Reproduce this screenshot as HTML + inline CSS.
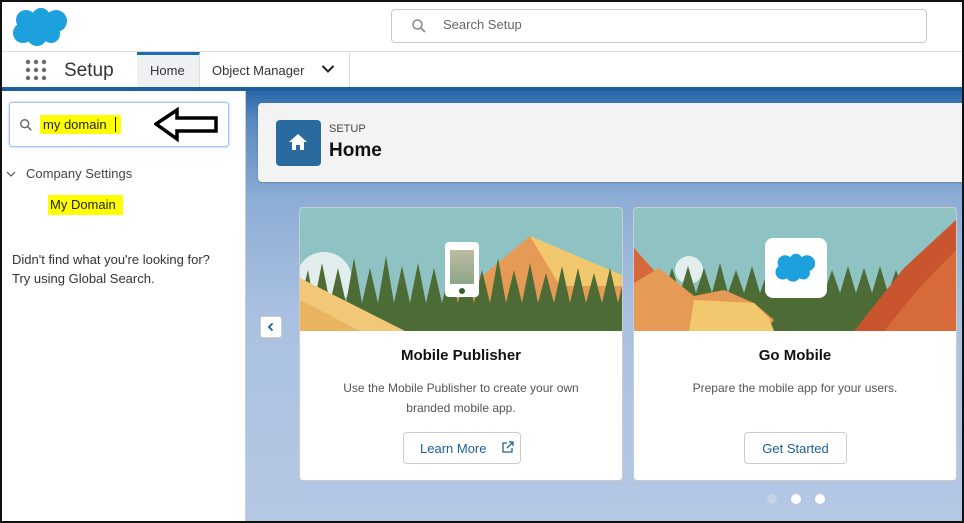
<!DOCTYPE html>
<html><head><style>
*{margin:0;padding:0;box-sizing:border-box}
body{width:964px;height:523px;overflow:hidden;font-family:"Liberation Sans",sans-serif;background:#fff;position:relative;color:#181818}
.frame{position:absolute;inset:0;border:2px solid #111;z-index:50;pointer-events:none}
.abs{position:absolute}
.hl{background:#ffff00}
</style></head><body>
<div class="frame"></div>
<svg class="abs" style="left:11px;top:6px" width="60" height="40" viewBox="0 0 60 40"><g fill="#1ca0de"><circle cx="15" cy="14" r="10"/><circle cx="30" cy="11" r="9"/><circle cx="45" cy="15" r="11"/><circle cx="12" cy="27" r="10"/><circle cx="26" cy="30" r="10"/><circle cx="40" cy="28" r="9"/><rect x="12" y="12" width="34" height="20"/></g></svg>
<div class="abs" style="left:391px;top:9px;width:536px;height:34px;border:1px solid #c9c9c9;border-radius:4px"></div>
<svg class="abs" style="left:411px;top:18px" width="16" height="16" viewBox="0 0 16 16"><circle cx="6.5" cy="6.5" r="4.5" fill="none" stroke="#888" stroke-width="1.5"/><path d="M10 10l4 4" stroke="#888" stroke-width="1.6"/></svg>
<div class="abs" style="left:443px;top:17px;font-size:13px;color:#666">Search Setup</div>
<div class="abs" style="left:0;top:51px;width:964px;height:1px;background:#ddd"></div>
<svg class="abs" style="left:25px;top:59px" width="22" height="22" viewBox="0 0 22 22" fill="#6b6b6b"><circle cx="3" cy="3" r="2.2"/><circle cx="11" cy="3" r="2.2"/><circle cx="19" cy="3" r="2.2"/><circle cx="3" cy="11" r="2.2"/><circle cx="11" cy="11" r="2.2"/><circle cx="19" cy="11" r="2.2"/><circle cx="3" cy="19" r="2.2"/><circle cx="11" cy="19" r="2.2"/><circle cx="19" cy="19" r="2.2"/></svg>
<div class="abs" style="left:64px;top:60px;font-size:19px;color:#333">Setup</div>
<div class="abs" style="left:137px;top:52px;width:63px;height:36px;background:#eef1f4;border-top:3px solid #1b6ea9;border-right:1px solid #ddd"></div>
<div class="abs" style="left:150px;top:63px;font-size:13px;color:#333">Home</div>
<div class="abs" style="left:212px;top:63px;font-size:13px;color:#333">Object Manager</div>
<svg class="abs" style="left:321px;top:64px" width="14" height="10" viewBox="0 0 14 10"><path d="M1.5 2l5.5 5.5L12.5 2" fill="none" stroke="#222" stroke-width="2"/></svg>
<div class="abs" style="left:349px;top:52px;width:1px;height:36px;background:#ddd"></div>
<div class="abs" style="left:0;top:87px;width:964px;height:4px;background:#1b5f9e"></div>
<div class="abs" style="left:9px;top:102px;width:220px;height:45px;border:1px solid #9fc3ef;border-radius:3px;box-shadow:0 0 2px #9fc3ef"></div>
<svg class="abs" style="left:19px;top:118px" width="14" height="14" viewBox="0 0 16 16"><circle cx="6.5" cy="6.5" r="4.5" fill="none" stroke="#666" stroke-width="1.6"/><path d="M10 10l4 4" stroke="#666" stroke-width="1.8"/></svg>
<div class="abs hl" style="left:40px;top:115px;width:81px;height:19px"></div>
<div class="abs" style="left:43px;top:117px;font-size:13px;color:#222">my domain</div>
<div class="abs" style="left:115px;top:117px;width:1px;height:15px;background:#111"></div>
<svg class="abs" style="left:154px;top:107px" width="66" height="35" viewBox="0 0 66 35"><path d="M2 17L23 3v8h39v13H23v8z" fill="none" stroke="#000" stroke-width="3.5"/></svg>
<svg class="abs" style="left:6px;top:169px" width="10" height="10" viewBox="0 0 10 10"><path d="M1 3l4 4 4-4" fill="none" stroke="#555" stroke-width="1.2"/></svg>
<div class="abs" style="left:26px;top:166px;font-size:13px;color:#444">Company Settings</div>
<div class="abs hl" style="left:48px;top:195px;width:75px;height:20px"></div>
<div class="abs" style="left:50px;top:197px;font-size:13px;color:#222">My Domain</div>
<div class="abs" style="left:12px;top:250px;font-size:13px;color:#333;line-height:19px">Didn't find what you're looking for?<br>Try using Global Search.</div>
<div class="abs" style="left:245px;top:91px;width:1px;height:432px;background:#ccc"></div>
<div class="abs" style="left:246px;top:91px;width:718px;height:432px;background:linear-gradient(#2a68a8 0px,#5a89c0 30px,#8eaed6 110px,#a9c0e0 220px,#b4c8e4 432px)"></div>
<div class="abs" style="left:258px;top:103px;width:706px;height:79px;background:#f3f3f3;border-radius:4px 0 0 4px;box-shadow:0 1px 2px rgba(0,0,0,.2)"></div>
<div class="abs" style="left:276px;top:120px;width:45px;height:46px;background:#2a6b9f;border-radius:4px"></div>
<svg class="abs" style="left:288px;top:132px" width="20" height="20" viewBox="0 0 20 20"><path d="M10 2L1 10h3v8h4v-5h4v5h4v-8h3z" fill="#fff"/></svg>
<div class="abs" style="left:329px;top:123px;font-size:11px;color:#444">SETUP</div>
<div class="abs" style="left:329px;top:140px;font-size:19px;font-weight:bold;color:#111">Home</div>
<div class="abs" style="left:260px;top:316px;width:22px;height:22px;background:#fff;border:1px solid #ccc;border-radius:3px"></div>
<svg class="abs" style="left:266px;top:322px" width="10" height="10" viewBox="0 0 10 10"><path d="M6.5 1.5L3 5l3.5 3.5" fill="none" stroke="#1b5f9e" stroke-width="1.8"/></svg>
<div class="abs" style="left:299px;top:207px;width:324px;height:274px;background:#fff;border:1px solid #ccc;border-radius:4px;overflow:hidden">
<svg width="324" height="123" viewBox="0 0 324 123" style="display:block">
<rect width="324" height="123" fill="#8fc3c3"/>
<circle cx="24" cy="72" r="28" fill="#e2eeee"/>
<path d="M150 95L230 28l60 30 34 20v45H150z" fill="#e59a55"/>
<path d="M230 28l30 50 64 0v-10z" fill="#f2c86f"/>
<path d="M0 95L8 62 14 95 22 55 30 95 38 60 46 95 54 50 62 95 70 60 78 95 86 48 94 95 102 58 110 95 118 55 126 95 134 60 142 95 150 62 158 95 166 55 174 95 182 62 190 95 198 50 206 95 214 62 222 95 230 55 238 95 246 65 254 95 262 58 270 95 278 60 286 95 294 65 302 95 310 60 318 95 324 70V123H0z" fill="#4c6b35"/>
<path d="M0 70 L105 123 H0z" fill="#f0c877"/>
<path d="M0 92 L60 123 H0z" fill="#e8b460"/>
</svg>
<div class="abs" style="left:145px;top:34px;width:34px;height:55px;background:#fff;border-radius:4px"></div>
<div class="abs" style="left:150px;top:42px;width:24px;height:34px;background:linear-gradient(#bdbca3,#8da586)"></div>
<div class="abs" style="left:159px;top:80px;width:6px;height:6px;border-radius:3px;background:#3b5a2c"></div>
<div style="text-align:center;font-size:15px;font-weight:bold;margin-top:16px;color:#111">Mobile Publisher</div>
<div style="text-align:center;font-size:12px;color:#555;margin-top:14px;line-height:20px">Use the Mobile Publisher to create your own<br>branded mobile app.</div>
<div class="abs" style="left:103px;top:224px;width:118px;height:32px;border:1px solid #ccc;border-radius:4px;font-size:13px;color:#1b5f9e;padding:8px 0 0 16px">Learn More</div>
<svg class="abs" style="left:202px;top:233px" width="12" height="12" viewBox="0 0 12 12"><path d="M5 2H1v9h9V7M7 1h4v4M11 1L5 7" fill="none" stroke="#1b5f9e" stroke-width="1.3"/></svg>
</div>
<div class="abs" style="left:633px;top:207px;width:324px;height:274px;background:#fff;border:1px solid #ccc;border-radius:4px;overflow:hidden">
<svg width="324" height="123" viewBox="0 0 324 123" style="display:block">
<rect width="324" height="123" fill="#8fc3c3"/>
<circle cx="55" cy="62" r="14" fill="#e2eeee"/>
<path d="M30 85L38 60 46 85 54 58 62 85 70 60 78 85 86 55 94 85 102 62 110 85 118 58 126 85 134 62 142 85 150 58 158 85 166 62 174 85 182 58 190 85 198 62 206 85 214 58 222 85 230 60 238 85 246 58 254 85 262 62 270 85 278 58 286 85 V123H30z" fill="#4c6b35"/>
<path d="M0 40L40 85 55 123H0z" fill="#d8683a"/>
<path d="M0 75L25 60 60 88 90 82 120 95 140 112 130 123H0z" fill="#e59a55"/>
<path d="M60 92 L120 95 L135 110 L140 123 H55z" fill="#f2c86f"/>
<path d="M324 10 L270 60 L220 123 H324z" fill="#c8552e"/>
<path d="M324 40 L285 80 L250 123 H324z" fill="#d66a38"/>
</svg>
<div class="abs" style="left:131px;top:30px;width:62px;height:60px;background:#fff;border-radius:8px"></div>
<svg class="abs" style="left:140px;top:42px" width="44" height="34" viewBox="0 0 60 40"><g fill="#1ca0de"><circle cx="15" cy="14" r="10"/><circle cx="30" cy="11" r="9"/><circle cx="45" cy="15" r="11"/><circle cx="12" cy="27" r="10"/><circle cx="26" cy="30" r="10"/><circle cx="40" cy="28" r="9"/><rect x="12" y="12" width="34" height="20"/></g></svg>
<div style="text-align:center;font-size:15px;font-weight:bold;margin-top:16px;color:#111">Go Mobile</div>
<div style="text-align:center;font-size:12px;color:#555;margin-top:14px;line-height:20px">Prepare the mobile app for your users.</div>
<div class="abs" style="left:110px;top:224px;width:103px;height:32px;border:1px solid #ccc;border-radius:4px;font-size:13px;color:#1b5f9e;text-align:center;padding-top:8px">Get Started</div>
</div>
<div class="abs" style="left:767px;top:494px;width:10px;height:10px;border-radius:5px;background:#c6d3e6"></div>
<div class="abs" style="left:791px;top:494px;width:10px;height:10px;border-radius:5px;background:#fff"></div>
<div class="abs" style="left:815px;top:494px;width:10px;height:10px;border-radius:5px;background:#fff"></div>
</body></html>
